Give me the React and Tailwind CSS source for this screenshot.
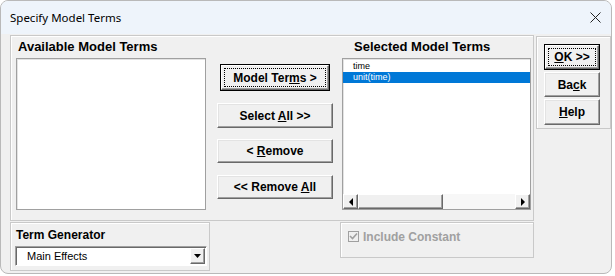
import React from "react";

const sans = { fontFamily: '"Liberation Sans", Arial, sans-serif' };

function RaisedButton({ children, className = "" }) {
  return (
    <div
      className={
        "flex items-center justify-center bg-[#f0f0f0] border border-t-white border-l-white border-r-[#696969] border-b-[#696969] shadow-[inset_-1px_-1px_0_#a0a0a0,inset_1px_1px_0_#e3e3e3] text-[12px] font-bold text-black " +
        className
      }
    >
      {children}
    </div>
  );
}

function DefaultButton({ children, className = "" }) {
  return (
    <div className={"border border-black " + className}>
      <div className="h-full flex items-center justify-center bg-[#f0f0f0] border border-t-white border-l-white border-r-[#696969] border-b-[#696969] shadow-[inset_-1px_-1px_0_#a0a0a0] p-[2px]">
        <div className="w-full h-full flex items-center justify-center border border-dotted border-black text-[12px] font-bold text-black">
          {children}
        </div>
      </div>
    </div>
  );
}

function Frame({ children, className = "" }) {
  return (
    <div
      className={
        "border border-[#c9c9c9] shadow-[inset_1px_1px_0_#ffffff] " + className
      }
    >
      {children}
    </div>
  );
}

function ArrowBox({ dir }) {
  return (
    <div className="w-[15px] h-[15px] flex items-center justify-center bg-[#f0f0f0] border border-t-white border-l-white border-r-[#696969] border-b-[#696969] shadow-[inset_-1px_-1px_0_#a0a0a0]">
      <svg width="6" height="8" viewBox="0 0 6 8">
        {dir === "left" ? (
          <path d="M5 0 L1 4 L5 8 Z" fill="#000" />
        ) : (
          <path d="M1 0 L5 4 L1 8 Z" fill="#000" />
        )}
      </svg>
    </div>
  );
}

export default function App() {
  return (
    <div className="w-[615px] h-[276px] bg-white" style={sans}>
      <div className="w-[612px] h-[274px] rounded-[8px] border border-[#b9b9b9] bg-[#f0f0f0] overflow-hidden flex flex-col">
        {/* Title bar */}
        <div className="h-[33px] shrink-0 bg-[#eef4fb] flex items-center justify-between pl-[9px] pr-[8px]">
          <span
            className="text-[11.5px] text-black"
            style={{ fontFamily: '"Noto Sans", "Open Sans", sans-serif' }}
          >
            Specify Model Terms
          </span>
          <svg width="11" height="11" viewBox="0 0 11 11" className="mr-[2px]">
            <path d="M0.5 0.5 L10.5 10.5 M10.5 0.5 L0.5 10.5" stroke="#222" strokeWidth="1" />
          </svg>
        </div>

        {/* Body */}
        <div className="flex flex-col pl-[9px] pt-[1px]">
          <div className="flex items-start">
            {/* Main frame */}
            <Frame className="w-[524px] h-[186px] flex pl-[5px]">
              <div className="flex flex-col">
                <div className="h-[22px] flex items-center pl-[2px] text-[13px] font-bold text-black">
                  Available Model Terms
                </div>
                <div className="w-[190px] h-[152px] bg-white border border-[#a0a0a0] shadow-[inset_1px_1px_0_#e3e3e3]" />
              </div>

              <div className="ml-[11px] w-[116px] pt-[28px] flex flex-col">
                <DefaultButton className="mx-[3px] h-[27px]">
                  <span>
                    Model Ter<u>m</u>s &gt;
                  </span>
                </DefaultButton>
                <RaisedButton className="mt-[12px] h-[25px]">
                  <span>
                    Select <u>A</u>ll &gt;&gt;
                  </span>
                </RaisedButton>
                <RaisedButton className="mt-[11px] h-[24px]">
                  <span>
                    &lt; <u>R</u>emove
                  </span>
                </RaisedButton>
                <RaisedButton className="mt-[12px] h-[24px]">
                  <span>
                    &lt;&lt; Remove <u>A</u>ll
                  </span>
                </RaisedButton>
              </div>

              <div className="ml-[9px] flex flex-col">
                <div className="h-[22px] flex items-center pl-[12px] text-[13px] font-bold text-black">
                  Selected Model Terms
                </div>
                <div className="w-[189px] h-[152px] bg-white border border-[#a0a0a0] shadow-[inset_1px_1px_0_#e3e3e3] flex flex-col">
                  <div className="flex-1 pt-[2px] text-[9px]">
                    <div className="h-[11px] leading-[11px] pl-[10px] text-black">time</div>
                    <div className="h-[11px] leading-[11px] pl-[10px] bg-[#0078d7] text-white">
                      unit(time)
                    </div>
                  </div>
                  <div className="h-[15px] flex">
                    <ArrowBox dir="left" />
                    <div className="w-[85px] h-[15px] bg-[#f0f0f0] border border-t-white border-l-white border-r-[#696969] border-b-[#696969] shadow-[inset_-1px_-1px_0_#a0a0a0]" />
                    <div className="flex-1 bg-[#f7f7f7]" />
                    <ArrowBox dir="right" />
                  </div>
                </div>
              </div>
            </Frame>

            {/* Right buttons frame */}
            <Frame className="ml-[2px] mt-[1px] w-[75px] h-[93px] pl-[7px] pt-[7px] flex flex-col">
              <DefaultButton className="w-[56px] h-[26px]">
                <span>
                  <u>O</u>K &gt;&gt;
                </span>
              </DefaultButton>
              <RaisedButton className="mt-[2px] w-[56px] h-[25px]">
                <span>
                  Ba<u>c</u>k
                </span>
              </RaisedButton>
              <RaisedButton className="mt-[2px] w-[56px] h-[26px]">
                <span>
                  <u>H</u>elp
                </span>
              </RaisedButton>
            </Frame>
          </div>

          <div className="flex items-start mt-[1px]">
            {/* Term generator */}
            <Frame className="w-[200px] h-[49px] pl-[4px] flex flex-col">
              <div className="pt-[5px] pl-[1px] leading-[14px] text-[12px] font-bold text-black">
                Term Generator
              </div>
              <div className="mt-[4px] w-[192px] h-[20px] bg-white border border-[#a0a0a0] border-r-white border-b-white shadow-[inset_1px_1px_0_#696969] flex items-center">
                <span className="flex-1 pl-[11px] text-[11px] text-black">Main Effects</span>
                <div className="w-[15px] h-[16px] mr-[1px] flex items-center justify-center bg-[#f0f0f0] border border-t-white border-l-white border-r-[#696969] border-b-[#696969] shadow-[inset_-1px_-1px_0_#a0a0a0]">
                  <svg width="7" height="4" viewBox="0 0 7 4">
                    <path d="M0 0 L7 0 L3.5 4 Z" fill="#000" />
                  </svg>
                </div>
              </div>
            </Frame>

            {/* Include constant */}
            <Frame className="ml-[130px] w-[194px] h-[36px] pl-[7px] pt-[7px] flex items-start">
              <div className="w-[11px] h-[11px] mt-[1px] bg-[#f0f0f0] border border-[#a0a0a0] flex items-center justify-center">
                <svg width="9" height="9" viewBox="0 0 9 9">
                  <path d="M1 4 L3.5 6.5 L8 1.5" stroke="#a0a0a0" strokeWidth="1.6" fill="none" />
                </svg>
              </div>
              <span className="ml-[4px] leading-[14px] text-[12px] font-bold text-[#a0a0a0]">
                Include Constant
              </span>
            </Frame>
          </div>
        </div>
      </div>
    </div>
  );
}
